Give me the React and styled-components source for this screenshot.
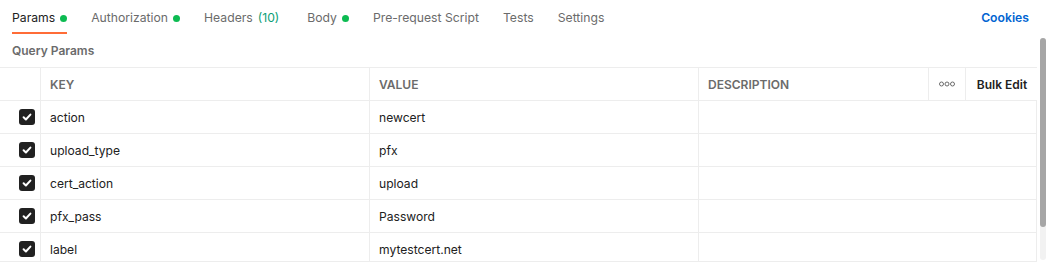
import React from "react";
import styled, { createGlobalStyle } from "styled-components";

const Global = createGlobalStyle`
  html, body { margin: 0; padding: 0; background: #fff; }
  body { font-family: Inter, "Noto Sans", "Liberation Sans", sans-serif; color: #212121; -webkit-font-smoothing: antialiased; }
  * { box-sizing: border-box; }
`;

const Page = styled.div`
  width: 1048px;
  height: 268px;
  overflow: hidden;
  background: #fff;
`;

const TabBar = styled.div`
  display: flex;
  align-items: flex-start;
  height: 34px;
  padding: 0 19px 0 12px;
`;

const Tabs = styled.div`
  display: flex;
  gap: 24px;
  flex: 1;
`;

const Tab = styled.div`
  display: flex;
  align-items: center;
  gap: 4px;
  font-size: 12.2px;
  line-height: 20px;
  padding: 8px 0 4px;
  color: ${(p) => (p.$active ? "#212121" : "#6b6b6b")};
  border-bottom: 2px solid ${(p) => (p.$active ? "#ff6c37" : "transparent")};
  margin-right: ${(p) => p.$extra || 0}px;
  white-space: nowrap;
`;

const Dot = styled.span`
  width: 7px;
  height: 7px;
  border-radius: 50%;
  background: #0cbb52;
  margin-left: 1px;
`;

const Count = styled.span`
  color: #0c9f77;
  margin-left: 1px;
`;

const Cookies = styled.div`
  font-size: 12.2px;
  font-weight: 600;
  line-height: 20px;
  padding-top: 8px;
  color: #0265d2;
`;

const ScrollArea = styled.div`
  margin-top: 3px;
  height: 225px;
  display: flex;
`;

const Viewport = styled.div`
  width: 1037px;
  flex: none;
  overflow: hidden;
  border-bottom: 1px solid #ededed;
`;

const ScrollTrack = styled.div`
  width: 11px;
  padding: 1px 2px 0 3px;
`;

const Rail = styled.div`
  height: 222px;
  background: #f2f2f2;
  border-radius: 3px;
  display: flex;
  flex-direction: column;
`;

const Thumb = styled.div`
  height: 189px;
  background: #a6a6a6;
  border-radius: 3px;
`;

const SectionLabel = styled.div`
  padding: 6px 12px 0;
  font-size: 12px;
  font-weight: 600;
  line-height: 16px;
  color: #6b6b6b;
  margin-bottom: 8px;
`;

const Table = styled.div`
  width: 100%;
  border-top: 1px solid #ededed;
`;

const Row = styled.div`
  display: grid;
  grid-template-columns: 41px 329px 329px ${(p) => (p.$header ? "230px 37px 71px" : "338px")};
  height: 33px;
  border-bottom: 1px solid #ededed;
`;

const Cell = styled.div`
  display: flex;
  align-items: center;
  padding: 0 9px;
  border-right: 1px solid ${(p) => (p.$noBorder ? "transparent" : "#ededed")};
  font-size: ${(p) => (p.$head ? 12 : 12.1)}px;
  font-weight: ${(p) => (p.$head ? 600 : 400)};
  color: ${(p) => (p.$head ? "#6b6b6b" : "#212121")};
  text-transform: ${(p) => (p.$head ? "uppercase" : "none")};
  white-space: nowrap;
  overflow: hidden;
`;

const CheckCell = styled(Cell)`
  justify-content: flex-end;
  padding: 0 5px 0 0;
`;

const IconCell = styled(Cell)`
  justify-content: center;
  padding: 0;
`;

const BulkCell = styled(Cell)`
  justify-content: center;
  color: #212121;
  text-transform: none;
  padding: 0 0 0 2px;
`;

const Box = styled.span`
  width: 16px;
  height: 16px;
  border-radius: 3px;
  background: #212121;
  display: flex;
  align-items: center;
  justify-content: center;
`;

const Checkbox = () => (
  <Box>
    <svg width="12" height="12" viewBox="0 0 12 12" fill="none">
      <path d="M2.6 6.3 L4.9 8.5 L9.4 3.6" stroke="#fff" strokeWidth="2" strokeLinecap="round" strokeLinejoin="round" />
    </svg>
  </Box>
);

const MoreIcon = () => (
  <svg width="16" height="6" viewBox="0 0 16 6" fill="none">
    <circle cx="2.5" cy="3" r="2" stroke="#6b6b6b" strokeWidth="1" />
    <circle cx="8" cy="3" r="2" stroke="#6b6b6b" strokeWidth="1" />
    <circle cx="13.5" cy="3" r="2" stroke="#6b6b6b" strokeWidth="1" />
  </svg>
);

const params = [
  ["action", "newcert"],
  ["upload_type", "pfx"],
  ["cert_action", "upload"],
  ["pfx_pass", "Password"],
  ["label", "mytestcert.net"],
];

export default function App() {
  return (
    <Page>
      <Global />
      <TabBar>
        <Tabs>
          <Tab $active>Params<Dot /></Tab>
          <Tab>Authorization<Dot /></Tab>
          <Tab $extra={4}>Headers<Count>(10)</Count></Tab>
          <Tab>Body<Dot /></Tab>
          <Tab>Pre-request Script</Tab>
          <Tab>Tests</Tab>
          <Tab>Settings</Tab>
        </Tabs>
        <Cookies>Cookies</Cookies>
      </TabBar>
      <ScrollArea>
        <Viewport>
          <SectionLabel>Query Params</SectionLabel>
          <Table>
            <Row $header>
              <CheckCell $head />
              <Cell $head>Key</Cell>
              <Cell $head>Value</Cell>
              <Cell $head>Description</Cell>
              <IconCell $head><MoreIcon /></IconCell>
              <BulkCell $head $noBorder>Bulk Edit</BulkCell>
            </Row>
            {params.map(([k, v]) => (
              <Row key={k}>
                <CheckCell><Checkbox /></CheckCell>
                <Cell>{k}</Cell>
                <Cell>{v}</Cell>
                <Cell />
              </Row>
            ))}
          </Table>
        </Viewport>
        <ScrollTrack>
          <Rail>
            <Thumb />
          </Rail>
        </ScrollTrack>
      </ScrollArea>
    </Page>
  );
}
